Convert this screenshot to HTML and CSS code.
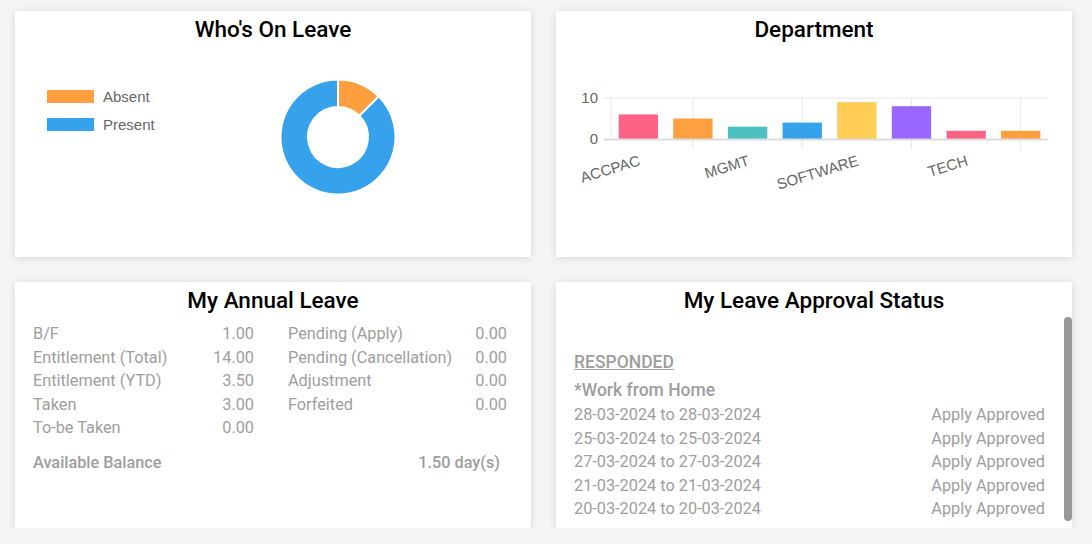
FILE: index.html
```html
<!DOCTYPE html>
<html lang="en">
<head>
<meta charset="utf-8">
<title>Dashboard</title>
<link rel="stylesheet" href="styles.css">
</head>
<body>
<main class="dashboard">
  <section class="card">
    <h2 class="card-title">Who's On Leave</h2>
    <div class="leave-body">
      <ul class="legend">
        <li class="legend-item"><span class="swatch swatch-absent"></span>Absent</li>
        <li class="legend-item"><span class="swatch swatch-present"></span>Present</li>
      </ul>
      <svg class="donut" width="120" height="120" viewBox="0 0 120 120">
        <path class="slice-present" d="M100.66 19.34 A57.5 57.5 0 1 1 60 2.5 L60 30 A30 30 0 1 0 81.21 38.79 Z"/>
        <path class="slice-absent" d="M60 2.5 A57.5 57.5 0 0 1 100.66 19.34 L81.21 38.79 A30 30 0 0 0 60 30 Z"/>
      </svg>
    </div>
  </section>

  <section class="card">
    <h2 class="card-title">Department</h2>
    <svg class="bar-chart" width="516" height="200" viewBox="0 0 516 200">
      <line class="grid" x1="48" y1="57" x2="492" y2="57"/>
      <line class="grid" x1="55" y1="57" x2="55" y2="98"/>
      <line class="grid" x1="136.9" y1="57" x2="136.9" y2="108"/>
      <line class="grid" x1="246.2" y1="57" x2="246.2" y2="108"/>
      <line class="grid" x1="355.4" y1="57" x2="355.4" y2="108"/>
      <line class="grid" x1="464.7" y1="57" x2="464.7" y2="108"/>
      <text class="tick" x="42" y="62" text-anchor="end">10</text>
      <text class="tick" x="42" y="103" text-anchor="end">0</text>
      <rect x="62.7" y="73.4" width="39.3" height="24.6" fill="#ff6384"/>
      <rect x="117.3" y="77.5" width="39.3" height="20.5" fill="#ff9f40"/>
      <rect x="172" y="85.7" width="39.3" height="12.3" fill="#4bc0c0"/>
      <rect x="226.6" y="81.6" width="39.3" height="16.4" fill="#36a2eb"/>
      <rect x="281.2" y="61.1" width="39.3" height="36.9" fill="#ffcd56"/>
      <rect x="335.8" y="65.2" width="39.3" height="32.8" fill="#9966ff"/>
      <rect x="390.5" y="89.8" width="39.3" height="8.2" fill="#ff6384"/>
      <rect x="445.1" y="89.8" width="39.3" height="8.2" fill="#ff9f40"/>
      <line class="axis" x1="48" y1="98.5" x2="492" y2="98.5"/>
      <text class="label" x="85" y="124" text-anchor="end" transform="rotate(-17 85 124)">ACCPAC</text>
      <text class="label" x="194.3" y="124" text-anchor="end" transform="rotate(-17 194.3 124)">MGMT</text>
      <text class="label" x="303.5" y="124" text-anchor="end" transform="rotate(-17 303.5 124)">SOFTWARE</text>
      <text class="label" x="412.8" y="124" text-anchor="end" transform="rotate(-17 412.8 124)">TECH</text>
    </svg>
  </section>

  <section class="card">
    <h2 class="card-title">My Annual Leave</h2>
    <div class="annual">
      <dl class="annual-col">
        <dt>B/F</dt><dd>1.00</dd>
        <dt>Entitlement (Total)</dt><dd>14.00</dd>
        <dt>Entitlement (YTD)</dt><dd>3.50</dd>
        <dt>Taken</dt><dd>3.00</dd>
        <dt>To-be Taken</dt><dd>0.00</dd>
      </dl>
      <dl class="annual-col">
        <dt>Pending (Apply)</dt><dd>0.00</dd>
        <dt>Pending (Cancellation)</dt><dd>0.00</dd>
        <dt>Adjustment</dt><dd>0.00</dd>
        <dt>Forfeited</dt><dd>0.00</dd>
      </dl>
    </div>
    <div class="balance">
      <span>Available Balance</span>
      <span>1.50 day(s)</span>
    </div>
  </section>

  <section class="card">
    <h2 class="card-title">My Leave Approval Status</h2>
    <div class="status-pane">
      <div class="status-content">
        <div class="status-heading">RESPONDED</div>
        <div class="status-type">*Work from Home</div>
        <ul class="status-list">
          <li class="status-row"><span>28-03-2024 to 28-03-2024</span><span>Apply Approved</span></li>
          <li class="status-row"><span>25-03-2024 to 25-03-2024</span><span>Apply Approved</span></li>
          <li class="status-row"><span>27-03-2024 to 27-03-2024</span><span>Apply Approved</span></li>
          <li class="status-row"><span>21-03-2024 to 21-03-2024</span><span>Apply Approved</span></li>
          <li class="status-row"><span>20-03-2024 to 20-03-2024</span><span>Apply Approved</span></li>
        </ul>
      </div>
      <div class="scrollbar"><div class="scrollbar-thumb"></div></div>
    </div>
  </section>
</main>
</body>
</html>
```

FILE: styles.css
```css
* { box-sizing: border-box; }

html, body {
  margin: 0;
  padding: 0;
  background: #f5f5f5;
  font-family: Roboto, "Liberation Sans", Arial, sans-serif;
}

.dashboard {
  display: grid;
  grid-template-columns: 516px 516px;
  grid-template-rows: 246px 246px;
  column-gap: 25px;
  row-gap: 25px;
  padding: 11px 0 0 15px;
}

.card {
  background: #fff;
  box-shadow: 0 1px 8px rgba(0, 0, 0, 0.13);
  overflow: hidden;
}

.card-title {
  margin: 5px 0 0;
  font-size: 22.5px;
  line-height: 26px;
  font-weight: 500;
  color: #000;
  text-align: center;
}

/* Who's on leave */
.leave-body {
  display: flex;
  align-items: flex-start;
}

.legend {
  list-style: none;
  margin: 48px 0 0;
  padding: 0 0 0 32px;
  width: 263px;
  display: flex;
  flex-direction: column;
  gap: 15px;
  font-family: "Liberation Sans", Arial, sans-serif;
  font-size: 15px;
  color: #666;
}

.legend-item {
  display: flex;
  align-items: center;
  gap: 9px;
  height: 13px;
}

.swatch {
  display: block;
  width: 47px;
  height: 13px;
}

.swatch-absent { background: #ff9f40; }
.swatch-present { background: #36a2eb; }

.donut {
  display: block;
  margin-top: 35px;
}

.slice-absent { fill: #ff9f40; stroke: #fff; stroke-width: 2; }
.slice-present { fill: #36a2eb; stroke: #fff; stroke-width: 2; }

/* Department chart */
.bar-chart {
  display: block;
  margin-top: -1px;
}

.bar-chart .grid {
  stroke: #e6e6e6;
  stroke-width: 1;
}

.bar-chart .axis {
  stroke: #dcdcdc;
  stroke-width: 2;
}

.bar-chart .tick,
.bar-chart .label {
  font-family: "Liberation Sans", Arial, sans-serif;
  font-size: 15px;
  fill: #666;
}

/* Annual leave */
.annual {
  display: grid;
  grid-template-columns: 221px 219px;
  column-gap: 34px;
  align-items: start;
  padding: 9px 0 0 18px;
  color: #9e9e9e;
  font-size: 16.3px;
  line-height: 23.5px;
}

.annual-col {
  display: grid;
  grid-template-columns: 1fr auto;
  align-content: start;
  margin: 0;
}

.annual-col dt,
.annual-col dd {
  margin: 0;
}

.annual-col dd {
  text-align: right;
}

.balance {
  display: flex;
  justify-content: space-between;
  margin-top: 11px;
  padding: 0 31px 0 18px;
  font-size: 16.3px;
  line-height: 23.5px;
  font-weight: 500;
  color: #9e9e9e;
}

/* Approval status */
.status-pane {
  display: flex;
  margin-top: 4px;
  height: 212px;
}

.status-content {
  flex: 1;
  overflow: hidden;
  padding: 33px 19px 0 18px;
  color: #9e9e9e;
  font-size: 16.3px;
}

.scrollbar {
  width: 8px;
  flex: none;
}

.scrollbar-thumb {
  height: 204px;
  background: #999;
  border-radius: 4px;
}

.status-heading {
  font-weight: 500;
  font-size: 17.5px;
  text-decoration: underline;
  line-height: 24px;
  margin-bottom: 4px;
}

.status-type {
  font-weight: 500;
  font-size: 17.5px;
  line-height: 24px;
  margin-bottom: 1px;
}

.status-list {
  list-style: none;
  margin: 0;
  padding: 0;
  line-height: 23.5px;
}

.status-row {
  display: flex;
  justify-content: space-between;
}
```
